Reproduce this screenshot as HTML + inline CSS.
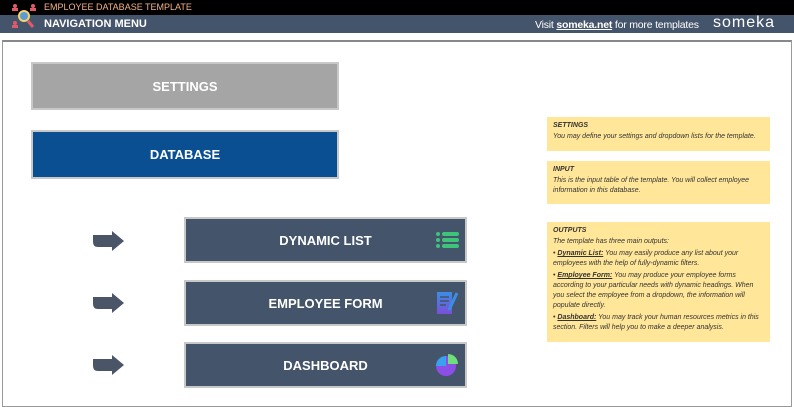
<html><head><style>
body{margin:0;width:794px;height:407px;background:#fff;font-family:"Liberation Sans",sans-serif;position:relative;overflow:hidden}
.a{position:absolute}
.btn{position:absolute;color:#fff;font-weight:bold;font-size:13px;display:flex;align-items:center;justify-content:center;box-sizing:border-box;border:2px solid #c8c8c8}
.dk{background:#44546a}
.note{position:absolute;background:#ffe699;font-size:7px;font-style:italic;color:#333;padding:4px 6px;box-sizing:border-box;line-height:10px}
.note b{display:block;margin-bottom:1px}
.note p{margin:2px 0 0}
</style></head><body>
<div class="a" style="left:0;top:0;width:794px;height:15px;background:#000"></div>
<div class="a" style="left:0;top:15px;width:794px;height:18px;background:#44546a"></div>
<div class="a" style="left:44px;top:2px;font-size:9px;color:#f4b183">EMPLOYEE DATABASE TEMPLATE</div>
<div class="a" style="left:44px;top:18px;font-size:11px;color:#fff;font-weight:bold">NAVIGATION MENU</div>
<svg class="a" style="left:8px;top:2px" width="30" height="30"><circle cx="7" cy="4" r="2" fill="#e05a6a"/><rect x="4" y="6" width="6" height="3" fill="#e05a6a"/><circle cx="25" cy="4" r="2" fill="#e05a6a"/><rect x="22" y="6" width="6" height="3" fill="#e05a6a"/><circle cx="7" cy="21" r="2" fill="#e05a6a"/><rect x="4" y="23" width="6" height="3" fill="#e05a6a"/><circle cx="16" cy="14" r="6" fill="#f6d26a"/><circle cx="16" cy="14" r="4" fill="#5b9bd5"/><line x1="20" y1="19" x2="25" y2="25" stroke="#e05a6a" stroke-width="3"/></svg>
<div class="a" style="left:535px;top:19px;font-size:10.5px;color:#fff;letter-spacing:-0.2px">Visit <b style="text-decoration:underline">someka.net</b> for more templates</div>
<div class="a" style="left:713px;top:14px;font-size:16px;color:#fff;letter-spacing:1px">someka</div>
<div class="a" style="left:2px;top:40px;width:788px;height:364px;border:1px solid #999;border-top:2px solid #888"></div>
<div class="btn" style="left:31px;top:62px;width:308px;height:48px;background:#a5a5a5">SETTINGS</div>
<div class="btn" style="left:31px;top:130px;width:308px;height:49px;background:#0b4f93">DATABASE</div>
<div class="btn dk" style="left:184px;top:217px;width:283px;height:46px">DYNAMIC LIST</div>
<div class="btn dk" style="left:184px;top:280px;width:283px;height:46px">EMPLOYEE FORM</div>
<div class="btn dk" style="left:184px;top:342px;width:283px;height:46px">DASHBOARD</div>
<svg class="a" style="left:435px;top:231px" width="26" height="18"><g fill="#3ec47a"><circle cx="3" cy="3" r="2"/><circle cx="3" cy="9" r="2"/><circle cx="3" cy="15" r="2"/><rect x="7" y="1" width="17" height="4" rx="2"/><rect x="7" y="7" width="17" height="4" rx="2"/><rect x="7" y="13" width="17" height="4" rx="2"/></g></svg>
<svg class="a" style="left:436px;top:290px" width="24" height="26"><defs><linearGradient id="g" x1="0" y1="0" x2="0" y2="1"><stop offset="0" stop-color="#3a8ee6"/><stop offset="1" stop-color="#7b4fd6"/></linearGradient></defs><rect x="1" y="2" width="15" height="22" fill="url(#g)"/><g stroke="#44546a" stroke-width="1.5"><line x1="4" y1="7" x2="13" y2="7"/><line x1="4" y1="11" x2="13" y2="11"/><line x1="4" y1="15" x2="10" y2="15"/></g><line x1="21" y1="3" x2="13" y2="20" stroke="#3a8ee6" stroke-width="3"/></svg>
<svg class="a" style="left:435px;top:353px" width="24" height="24"><circle cx="11" cy="13" r="10" fill="#8b4fe6"/><path d="M11 13 L11 3 A10 10 0 0 0 1 13 Z" fill="#3aa0f0"/><path d="M13 11 L13 1 A10 10 0 0 1 23 11 Z" fill="#6ee07a"/></svg>
<svg class="a" style="left:92px;top:231px" width="33" height="20"><path d="M1 4 H20 V0 L32 10 L20 20 V16 H6 Q1 16 1 11 Z" fill="#4a5568"/></svg>
<svg class="a" style="left:92px;top:293px" width="33" height="20"><path d="M1 4 H20 V0 L32 10 L20 20 V16 H6 Q1 16 1 11 Z" fill="#4a5568"/></svg>
<svg class="a" style="left:92px;top:355px" width="33" height="20"><path d="M1 4 H20 V0 L32 10 L20 20 V16 H6 Q1 16 1 11 Z" fill="#4a5568"/></svg>
<div class="note" style="left:547px;top:117px;width:223px;height:34px"><b>SETTINGS</b>You may define your settings and dropdown lists for the template.</div>
<div class="note" style="left:547px;top:161px;width:223px;height:43px"><b>INPUT</b>This is the input table of the template. You will collect employee information in this database.</div>
<div class="note" style="left:547px;top:222px;width:223px;height:120px"><b>OUTPUTS</b>The template has three main outputs:<p>• <b style="display:inline;text-decoration:underline">Dynamic List:</b> You may easily produce any list about your employees with the help of fully-dynamic filters.</p><p>• <b style="display:inline;text-decoration:underline">Employee Form:</b> You may produce your employee forms according to your particular needs with dynamic headings. When you select the employee from a dropdown, the information will populate directly.</p><p>• <b style="display:inline;text-decoration:underline">Dashboard:</b> You may track your human resources metrics in this section. Filters will help you to make a deeper analysis.</p></div>
</body></html>
